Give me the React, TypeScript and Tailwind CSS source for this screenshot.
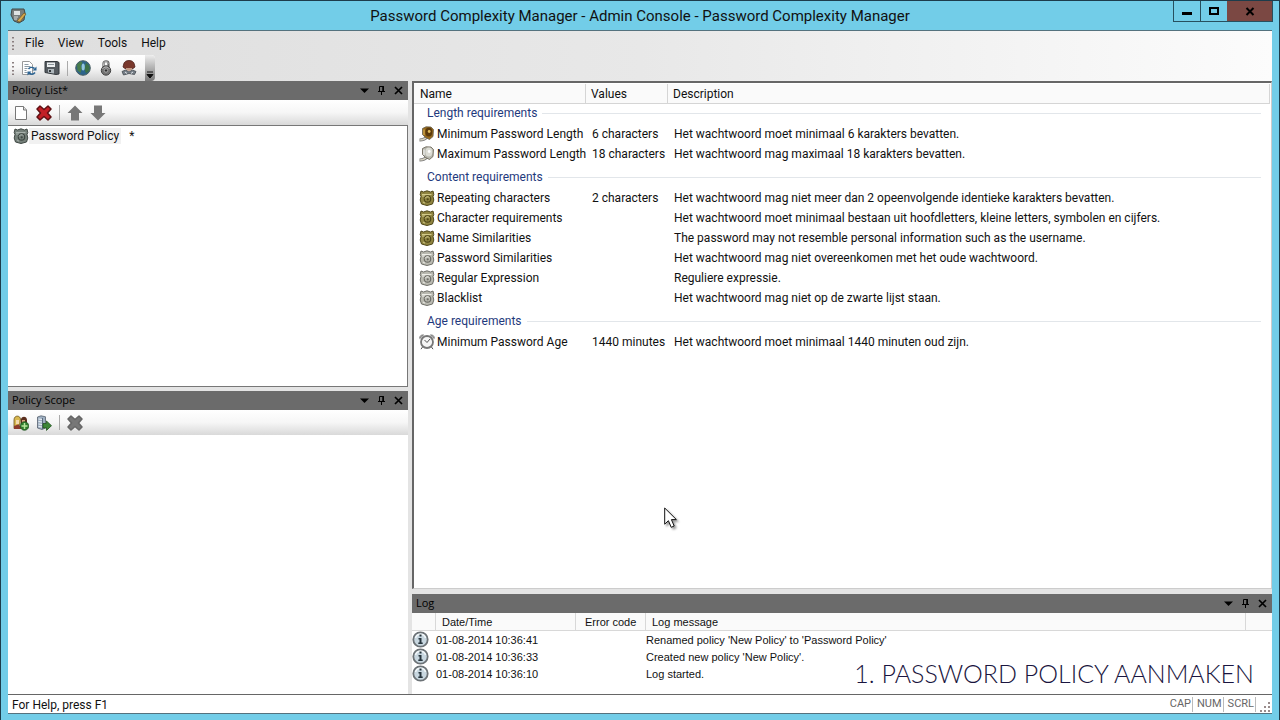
import React from "react";

type Rule = {
  name: string;
  value?: string;
  description: string;
  icon: React.ReactNode;
};

const GOLD = { fill: "#8f8440", dark: "#4f4719", light: "#d3cb8c" };
const SILVER = { fill: "#b9b9b0", dark: "#6f6f69", light: "#efefea" };
const SLATE = { fill: "#75807a", dark: "#3f4743", light: "#a8b1ac" };

const groups: { title: string; rules: Rule[] }[] = [
  {
    title: "Length requirements",
    rules: [
      { name: "Minimum Password Length", value: "6 characters", description: "Het wachtwoord moet minimaal 6 karakters bevatten.", icon: <Tape body="#96691b" face="#5b3a0c" hub="#e3bd5d" /> },
      { name: "Maximum Password Length", value: "18 characters", description: "Het wachtwoord mag maximaal 18 karakters bevatten.", icon: <Tape body="#b5b5ac" face="#dcdcd4" hub="#ffffff" /> },
    ],
  },
  {
    title: "Content requirements",
    rules: [
      { name: "Repeating characters", value: "2 characters", description: "Het wachtwoord mag niet meer dan 2 opeenvolgende identieke karakters bevatten.", icon: <Badge {...GOLD} /> },
      { name: "Character requirements", description: "Het wachtwoord moet minimaal bestaan uit hoofdletters, kleine letters, symbolen en cijfers.", icon: <Badge {...GOLD} /> },
      { name: "Name Similarities", description: "The password may not resemble personal information such as the username.", icon: <Badge {...GOLD} /> },
      { name: "Password Similarities", description: "Het wachtwoord mag niet overeenkomen met het oude wachtwoord.", icon: <Badge {...SILVER} /> },
      { name: "Regular Expression", description: "Reguliere expressie.", icon: <Badge {...SILVER} /> },
      { name: "Blacklist", description: "Het wachtwoord mag niet op de zwarte lijst staan.", icon: <Badge {...SILVER} /> },
    ],
  },
  {
    title: "Age requirements",
    rules: [
      { name: "Minimum Password Age", value: "1440 minutes", description: "Het wachtwoord moet minimaal 1440 minuten oud zijn.", icon: <AlarmClock /> },
    ],
  },
];

const logEntries = [
  { time: "01-08-2014 10:36:41", message: "Renamed policy 'New Policy' to 'Password Policy'" },
  { time: "01-08-2014 10:36:33", message: "Created new policy 'New Policy'." },
  { time: "01-08-2014 10:36:10", message: "Log started." },
];

export default function App() {
  return (
    <div className="relative flex h-screen flex-col overflow-hidden border-x border-t border-[#1d3c4b] bg-[#72cde8] font-['Roboto',sans-serif] text-xs text-[#111]">
      <TitleBar />

      <div className="mx-[7px] mb-[6px] flex min-h-0 flex-1 flex-col border-y border-[#54727e] bg-[#e4e4e4]">
        <header className="h-[50px] shrink-0 bg-linear-to-r from-[#dedede] via-[#e8e8e8] to-[#fcfcfc]">
          <nav className="flex h-6 items-center pl-1">
            <Grip />
            {["File", "View", "Tools", "Help"].map((item) => (
              <button key={item} type="button" className="px-[7px]">{item}</button>
            ))}
          </nav>
          <div className="flex h-[26px] w-[147px] items-center rounded-r bg-linear-to-b from-white via-[#f6f6f6] to-[#d2d2d2] pl-1">
            <Grip />
            <div className="ml-[3px] flex items-center gap-[7px]">
              <IconButton label="Reload"><PageRefresh /></IconButton>
              <IconButton label="Save"><Floppy /></IconButton>
              <Separator />
              <IconButton label="Domain"><Globe /></IconButton>
              <IconButton label="Lock"><Padlock /></IconButton>
              <IconButton label="License"><Spy /></IconButton>
            </div>
            <button type="button" aria-label="Toolbar options" className="ml-auto flex h-full w-[10px] items-end justify-center rounded-r bg-linear-to-b from-[#eee] to-[#777] pb-[2px]">
              <svg width="8" height="8" viewBox="0 0 8 8"><path d="M1 1h6M1 3.5h6L4 7z" stroke="#111" fill="#111" /></svg>
            </button>
          </div>
        </header>

        <main className="flex min-h-0 flex-1 gap-1">
          <aside className="flex w-[400px] shrink-0 flex-col gap-1">
            <section className="flex h-[306px] shrink-0 flex-col">
              <PaneHeader title="Policy List*" />
              <PaneToolbar>
                <IconButton label="New policy"><NewPage /></IconButton>
                <IconButton label="Delete policy"><Cross fill="#c32026" stroke="#5e1013" /></IconButton>
                <Separator />
                <IconButton label="Move up"><Arrow /></IconButton>
                <IconButton label="Move down"><Arrow down /></IconButton>
              </PaneToolbar>
              <ul className="flex-1 border border-l-0 border-[#777] bg-white">
                <li className="flex h-5 items-center pl-[5px]">
                  <Badge {...SLATE} />
                  <span className="bg-[#f1f1f1] px-[2px]">Password Policy</span>
                  <span className="ml-2">*</span>
                </li>
              </ul>
            </section>
            <section className="flex min-h-0 flex-1 flex-col bg-white">
              <PaneHeader title="Policy Scope" />
              <PaneToolbar>
                <IconButton label="Add group"><Users /></IconButton>
                <IconButton label="Add unit"><Server /></IconButton>
                <Separator />
                <IconButton label="Remove"><Cross fill="#777" stroke="#666" /></IconButton>
              </PaneToolbar>
            </section>
          </aside>

          <div className="flex min-w-0 flex-1 flex-col gap-[5px]">
            <section className="min-h-0 flex-1 border-2 border-r border-b border-[#666] border-r-[#ccc] border-b-[#ccc] bg-white pt-px pr-px">
              <RuleTable />
            </section>
            <section className="flex h-[100px] shrink-0 flex-col bg-white font-['Liberation_Sans',sans-serif] text-[11px]">
              <PaneHeader title="Log" />
              <LogTable />
            </section>
          </div>
        </main>

        <footer className="flex h-[19px] shrink-0 items-center border-t border-[#666] bg-white pt-px pl-1">
          <span>For Help, press F1</span>
          <div className="ml-auto flex text-[11px] text-[#666]">
            {["CAP", "NUM", "SCRL"].map((key) => (
              <span key={key} className="border-r border-[#bbb] pr-px pl-1">{key}</span>
            ))}
          </div>
          <svg className="ml-1 self-end" width="12" height="12" viewBox="0 0 12 12" fill="#998c8c">
            <path d="M8 1h2v2H8zM8 5h2v2H8zM8 9h2v2H8zM4 5h2v2H4zM4 9h2v2H4zM0 9h2v2H0z" />
          </svg>
        </footer>
      </div>

      <p className="pointer-events-none absolute right-[25px] bottom-[31px] font-['Lato',sans-serif] text-[25px] leading-8 font-light text-[#1a1540]">
        1. PASSWORD POLICY AANMAKEN
      </p>
      <svg className="pointer-events-none absolute top-[506px] left-[663px] drop-shadow-[2px_2px_1px_rgba(0,0,0,0.4)]" width="14" height="22" viewBox="0 0 14 22">
        <path d="M.7 1v16.2l3.7-3.5 2.8 6.6 3-1.3-2.8-6.4h5z" fill="#fff" stroke="#111" />
      </svg>
    </div>
  );
}

function TitleBar() {
  return (
    <div className="grid h-[29px] shrink-0 grid-cols-[1fr_auto_1fr] items-center">
      <svg className="ml-[9px]" width="17" height="17" viewBox="0 0 17 17">
        <path d="M2 2h12l1 4-1 7-5 3-5-2-3-6z" fill="#777d7c" stroke="#414846" />
        <path d="M4 4h6v4H4z" fill="#dfe3e3" />
        <path d="m7 14 7-8 2 1-6 8z" fill="#d5a94f" stroke="#684c1a" strokeWidth=".6" />
        <path d="M4 10h4M4 12h3" stroke="#d5d9d8" />
      </svg>
      <h1 className="text-[15px] leading-5">Password Complexity Manager - Admin Console - Password Complexity Manager</h1>
      <div className="mr-[6px] flex h-[21px] self-start justify-self-end border border-t-0 border-[#27505f]">
        <button type="button" aria-label="Minimize" className="flex w-[27px] items-center justify-center border-r border-[#27505f]">
          <span className="mt-1 h-[3px] w-[10px] bg-black" />
        </button>
        <button type="button" aria-label="Maximize" className="flex w-[26px] items-center justify-center">
          <span className="h-2 w-[10px] border-2 border-black" />
        </button>
        <button type="button" aria-label="Close" className="flex w-[45px] items-center justify-center bg-[#7b4843]">
          <svg width="10" height="9" viewBox="0 0 10 9"><path d="m1.500 1 7 7m0-7-7 7" stroke="#000" strokeWidth="2" /></svg>
        </button>
      </div>
    </div>
  );
}

function PaneHeader({ title }: { title: string }) {
  return (
    <div className="flex h-[19px] shrink-0 items-center bg-[#6b6b6b] pr-1 pl-1 font-['Open_Sans',sans-serif] text-black">
      <h2 className="text-[11px]">{title}</h2>
      <div className="ml-auto flex items-center gap-[6px]">
        <button type="button" aria-label="Pane menu">
          <svg width="11" height="11" viewBox="0 0 11 11"><path d="M1 3.500h9L5.500 8z" /></svg>
        </button>
        <button type="button" aria-label="Auto hide">
          <svg width="11" height="11" viewBox="0 0 11 11" fill="none" stroke="#000">
            <path d="M3.500 6.500v-5h4v5M2 6.500h7M5.500 7v3" />
            <path d="M7 1v6" strokeWidth="1.500" />
          </svg>
        </button>
        <button type="button" aria-label="Close pane">
          <svg width="11" height="11" viewBox="0 0 11 11"><path d="m2 2 7 7m0-7-7 7" stroke="#000" strokeWidth="1.700" /></svg>
        </button>
      </div>
    </div>
  );
}

function PaneToolbar({ children }: { children: React.ReactNode }) {
  return (
    <div className="flex h-[25px] shrink-0 items-center gap-[7px] bg-linear-to-b from-white via-[#f6f6f6] to-[#d9d9d9] pl-[5px]">
      {children}
    </div>
  );
}

function RuleTable() {
  return (
    <table className="w-full table-fixed border-separate border-spacing-0 text-left">
      <colgroup>
        <col className="w-[172px]" />
        <col className="w-[82px]" />
        <col />
      </colgroup>
      <thead>
        <tr className="h-5">
          {["Name", "Values", "Description"].map((head) => (
            <th key={head} className="border-r border-b border-[#d5d5d5] bg-[#fafafa] py-0 pl-[5px] font-normal first:pl-[6px]">{head}</th>
          ))}
        </tr>
      </thead>
      {groups.map((group) => (
        <tbody key={group.title} className="group">
          <tr>
            <th colSpan={3} className="pt-[4px] pr-[9px] pb-[2px] pl-[13px] font-normal text-[#1f3a7d] group-first-of-type:pt-0">
              <div className="flex h-[18px] items-center gap-[5px]">
                {group.title}
                <span className="h-px flex-1 bg-[#e2e6ea]" />
              </div>
            </th>
          </tr>
          {group.rules.map((rule) => (
            <tr key={rule.name} className="h-5 whitespace-nowrap">
              <td className="p-0 pl-[5px]">
                <div className="flex h-5 items-center gap-[2px]">{rule.icon}{rule.name}</div>
              </td>
              <td className="p-0 pl-[6px]">{rule.value}</td>
              <td className="p-0 pl-[6px]">{rule.description}</td>
            </tr>
          ))}
        </tbody>
      ))}
    </table>
  );
}

function LogTable() {
  return (
    <table className="w-full table-fixed border-separate border-spacing-0 text-left">
      <colgroup>
        <col className="w-6" />
        <col className="w-[140px]" />
        <col className="w-[70px]" />
        <col />
        <col className="w-[26px]" />
      </colgroup>
      <thead>
        <tr className="h-[18px]">
          {["", "Date/Time", "Error code", "Log message", ""].map((head, i) => (
            <th key={i} className="border-r border-b border-[#d8d8d8] bg-[#fafafa] pt-[2px] pr-0 pb-0 pl-[6px] leading-[15px] font-normal last:border-r-0 nth-3:pl-[9px]">{head}</th>
          ))}
        </tr>
      </thead>
      <tbody>
        {logEntries.map((entry) => (
          <tr key={entry.time} className="h-[17px] leading-4 whitespace-nowrap">
            <td className="p-0"><Info /></td>
            <td className="p-0">{entry.time}</td>
            <td className="p-0" />
            <td className="p-0" colSpan={2}>{entry.message}</td>
          </tr>
        ))}
      </tbody>
    </table>
  );
}

function IconButton({ label, children }: { label: string; children: React.ReactNode }) {
  return <button type="button" aria-label={label} className="size-4">{children}</button>;
}

function Separator() {
  return <span className="h-[15px] w-px bg-[#aaa]" />;
}

function Grip() {
  return (
    <svg className="mr-[2px]" width="4" height="14" viewBox="0 0 4 14" fill="#8a7f80">
      <path d="M0 1h2v1.500H0zM0 5h2v1.500H0zM0 9h2v1.500H0zM0 12.500h2V14H0z" />
    </svg>
  );
}

/* ---- 16px icons ---- */

function Badge({ fill, dark, light }: { fill: string; dark: string; light: string }) {
  return (
    <svg className="shrink-0" width="16" height="16" viewBox="0 0 16 16">
      <path d="M2 1 4.500 2 8 .8l3.500 1.200L14 1l.8 3.500-.8 2 .8 3.500-1.300 4L8 15.500 2.500 14 1.200 10 2 6.500l-.8-2z" fill={fill} stroke={dark} />
      <path d="M3 4.500h9.500M3 6h3" stroke={light} strokeWidth="1.200" />
      <circle cx="8.500" cy="9" r="3.200" fill={fill} stroke={dark} strokeWidth="1.200" />
      <path d="M6 8.500a2.600 2.600 0 0 1 4.500-.8M4 12l2 1.200" stroke={light} fill="none" />
      <circle cx="8.700" cy="9.300" r="1.100" fill={dark} />
    </svg>
  );
}

function Tape({ body, face, hub }: { body: string; face: string; hub: string }) {
  return (
    <svg className="shrink-0" width="16" height="16" viewBox="0 0 16 16">
      <path d="M.5 14c4 0 6-1 8.500-4" stroke="#777" strokeWidth="3" fill="none" />
      <path d="M.5 14c4 0 6-1 8.500-4" stroke="#d8d4c2" strokeWidth="1.200" fill="none" />
      <path d="M3.500 2.500 7 .8l5 .2 2.500 2.500-.5 7-3.500 3-4-2-3-3z" fill={body} stroke="#665f50" strokeWidth=".8" />
      <ellipse cx="9.800" cy="6" rx="3.500" ry="4.500" fill={face} />
      <circle cx="10.200" cy="5.500" r="1.400" fill={hub} />
      <path d="M5 3.500v5.500" stroke={hub} />
    </svg>
  );
}

function AlarmClock() {
  return (
    <svg className="shrink-0" width="16" height="16" viewBox="0 0 16 16" fill="none" stroke="#777">
      <path d="M.8 4.500C.5 2 2 .8 4.500 1zM15.200 4.500C15.500 2 14 .8 11.500 1z" fill="#ccc" />
      <circle cx="8" cy="8" r="6" fill="#f5f5f5" strokeWidth="1.800" />
      <path d="m5.500 6 2.500 2.500L11 5M3.500 13 2 15.200M12.500 13l1.500 2.200" stroke="#555" />
    </svg>
  );
}

function Info() {
  return (
    <svg width="17" height="17" viewBox="0 0 17 17">
      <circle cx="8.500" cy="8.500" r="7.200" fill="#c8d7e0" stroke="#6c7276" strokeWidth="1.800" />
      <path d="M3.500 7a5.200 5.200 0 0 1 10 0" stroke="#f3f8fa" fill="none" strokeWidth="1.500" />
      <path d="M7.500 3.500h2v2h-2zM6.500 7h3v4.500h1.200V13H6.300v-1.500h1.200v-3h-1z" fill="#26343c" />
    </svg>
  );
}

function PageRefresh() {
  return (
    <svg width="16" height="16" viewBox="0 0 16 16" fill="none">
      <path d="M1.500 1.500h7l3 3v10h-10z" fill="#fff" stroke="#999" />
      <path d="M3.500 4.500h4M3.500 6.500h6M3.500 8.500h3M3.500 10.500h2M3.500 12.500h3" stroke="#8c9aa5" />
      <path d="M7.500 9c1.500-2 4-2 6-.5M14 12.500c-1.500 2-4 2-6 .5" stroke="#2d6594" strokeWidth="1.600" />
      <path d="M15.500 6.500v4h-4zM6.500 15.500v-4h4z" fill="#2d6594" />
    </svg>
  );
}

function Floppy() {
  return (
    <svg width="16" height="16" viewBox="0 0 16 16">
      <path d="M1 1.500h12l2 1v11.500l-3 .5-11-2z" fill="#555b60" stroke="#33383c" />
      <path d="M3 2.500h8v4.500H3z" fill="#eceff0" />
      <path d="M4 4.500h6" stroke="#8a949a" />
      <path d="M4 9h6v4.500l-6-1z" fill="#aeb7bc" />
      <path d="M5 10h2v2H5z" fill="#33383c" />
    </svg>
  );
}

function Globe() {
  return (
    <svg width="16" height="16" viewBox="0 0 16 16">
      <circle cx="8" cy="8" r="7.300" fill="#2c648c" stroke="#4a5f63" />
      <path d="M2 4.500 5.500 1.500l2 1L6 6l1 2.500L5.500 13l-3-2.500z" fill="#497d4b" />
      <path d="M11 2.500 14.500 6v4.500L11 13.500 9.500 9z" fill="#3c7147" />
      <ellipse cx="8.200" cy="7" rx="1.600" ry="3.500" fill="#93c6df" />
    </svg>
  );
}

function Padlock() {
  return (
    <svg width="16" height="16" viewBox="0 0 16 16" fill="none">
      <path d="M5.500 8V3.500C5.500.5 10.500.5 10.500 3.500V8" stroke="#666" strokeWidth="2.200" />
      <path d="M5.500 8V3.500C5.500 1 10 1 10.500 3.500" stroke="#ccc" strokeWidth=".8" />
      <circle cx="8" cy="10.500" r="4.700" fill="#737373" stroke="#404040" />
      <path d="M4.500 9a4 4 0 0 1 7 0" stroke="#bcbcbc" />
      <circle cx="8" cy="10.500" r="1.700" fill="#2e2e2e" stroke="#ccc" strokeWidth=".7" />
    </svg>
  );
}

function Spy() {
  return (
    <svg width="16" height="16" viewBox="0 0 16 16">
      <path d="M2.500 5C3 1.500 5.500.5 8 .5S13 1.500 13.500 5l.5 2-2 1.500H4L2 7z" fill="#79382c" stroke="#4e211a" strokeWidth=".8" />
      <path d="M5 8h6v2l-3 1-3-1z" fill="#c49b86" />
      <path d="M1 11.500 4.500 10 8 12l3.500-2 3.500 1.500-1.500 3L8 13.500 2.500 15z" fill="#777f88" stroke="#41474d" strokeWidth=".8" />
      <path d="m4 12 2 1.500M12 12l-2 1.500" stroke="#e0e4e7" />
    </svg>
  );
}

function NewPage() {
  return (
    <svg width="16" height="16" viewBox="0 0 16 16">
      <path d="M2.500 1.500h8l3 3.500v9.500h-11z" fill="#fff" stroke="#777" />
      <path d="M10.500 1.500V5h3" fill="#ddd" stroke="#777" />
    </svg>
  );
}

function Cross({ fill, stroke }: { fill: string; stroke: string }) {
  return (
    <svg width="16" height="16" viewBox="0 0 16 16">
      <path d="M4 1 8 4.500 12 1l3 3-3.500 4 3.500 4-3 3-4-3.500L4 15l-3-3 3.500-4L1 4z" fill={fill} stroke={stroke} strokeWidth="1.500" strokeLinejoin="round" />
    </svg>
  );
}

function Arrow({ down = false }: { down?: boolean }) {
  return (
    <svg className={down ? "rotate-180" : ""} width="16" height="16" viewBox="0 0 16 16">
      <path d="m8 .5 7.500 7.500H12v7.500H4V8H.5z" fill="#777" />
    </svg>
  );
}

function Users() {
  return (
    <svg width="16" height="16" viewBox="0 0 16 16">
      <path d="M1 5c0-5 6-5 6.500-1l-.5 5-6 4.500z" fill="#d9b84f" stroke="#6a5420" strokeWidth=".8" />
      <path d="M3 5h3v4H3z" fill="#f3d9ae" />
      <path d="M8 4c1-3.500 6-3 6 1v4H8z" fill="#5a2d1d" />
      <path d="M9 5h3v3H9z" fill="#d7a27c" />
      <path d="M1 14v-3l4-1.500 3 1.500v3z" fill="#8c3b2c" />
      <circle cx="11.500" cy="11" r="4.300" fill="#2f7a2d" stroke="#1e4f1d" strokeWidth=".7" />
      <path d="M11.500 8v6M8.500 11h6" stroke="#b5e59b" strokeWidth="1.500" />
    </svg>
  );
}

function Server() {
  return (
    <svg width="16" height="16" viewBox="0 0 16 16">
      <path d="M1.500 2 5 .8l4.500 1V13L6 14.500l-4.500-1.500z" fill="#9fb0c2" stroke="#55606d" strokeWidth=".8" />
      <path d="M2.500 4 6 4.500M2.500 6.500 6 7M2.500 9l3.500.5M2.500 11.500 6 12" stroke="#eef3f7" />
      <path d="M6.500 3v11" stroke="#5b6b80" />
      <path d="M7 8.500h3.500V6l5 4.700-5 4.700v-2.500H7z" fill="#3c8637" stroke="#225220" strokeWidth=".8" />
    </svg>
  );
}
